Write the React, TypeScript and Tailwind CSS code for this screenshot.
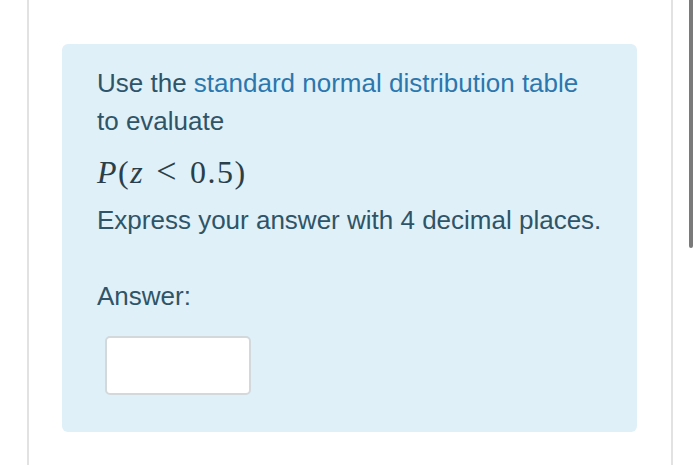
export default function App() {
  return (
    <div className="relative h-[465px] w-[700px] overflow-hidden bg-white font-['Liberation_Sans',Arial,sans-serif]">
      <div className="ml-[27px] h-full w-[646px] border-x-2 border-[#e2e2e2] pl-[33px] pt-[44px]">
        <div className="h-[388px] w-[575px] rounded-[6px] bg-[#dff0f8] pl-[35px] pt-[20px] text-[26px] leading-[38px] text-[#2f5467]">
          <p>
            Use the <span className="text-[#2b77ae]">standard normal distribution table</span>
            <br />
            to evaluate
          </p>
          <p className="mt-[13px] font-['Liberation_Serif',serif] text-[32px] tracking-[1.5px] text-[#2a3f4a]">
            <i>P</i>(<i>z</i>
            <span className="mx-[12px] text-[36px] leading-[30px]">&lt;</span>0.5)
          </p>
          <p className="mt-[10px]">Express your answer with 4 decimal places.</p>
          <p className="mt-[38px]">Answer:</p>
          <input
            type="text"
            className="ml-[8px] mt-[21px] block h-[59px] w-[146px] rounded-[5px] border-2 border-[#d3d8db] bg-white outline-none"
          />
        </div>
      </div>
      <div className="absolute right-[7px] top-0 h-[248px] w-[4px] rounded-b-full bg-[#7a7a7a]" />
    </div>
  );
}
